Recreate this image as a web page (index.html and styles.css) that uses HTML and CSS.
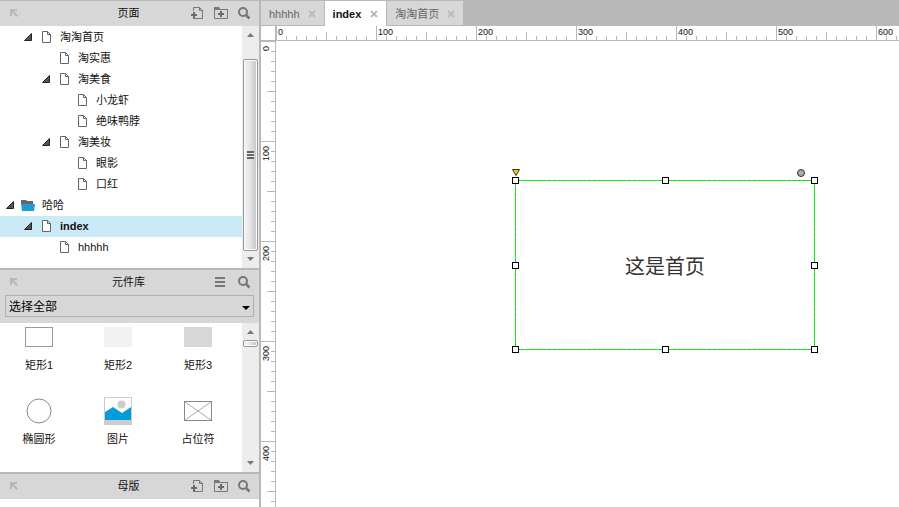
FILE: index.html
```html
<!DOCTYPE html>
<html lang="zh-CN">
<head>
<meta charset="utf-8">
<title>index</title>
<link rel="stylesheet" href="styles.css">
</head>
<body>
<svg class="defs" aria-hidden="true">
  <symbol id="i-collapse" viewBox="0 0 8 8"><path d="M0 0h7v2H3.600L8 6.400 6.400 8 2 3.600V7H0z" fill="#b8b8b8"/></symbol>
  <symbol id="i-add-page" viewBox="0 0 14 14"><path d="M3.500 5V1.500H9.500L12.500 4.500V12.500H3M9.500 1.500V4.500H12.500" fill="none" stroke="#777"/><path d="M4 6v6M1 9h6" stroke="#6a6a6a" stroke-width="2"/></symbol>
  <symbol id="i-add-folder" viewBox="0 0 14 14"><path d="M.5 12.500V3.500H13.500V12.500z" fill="none" stroke="#777"/><path d="M0 1h5l1 2h8v1H0z" fill="#777"/><path d="M7 5v6M4 8h6" stroke="#6a6a6a" stroke-width="2"/></symbol>
  <symbol id="i-search" viewBox="0 0 14 14"><circle cx="5" cy="6" r="4" fill="none" stroke="#777" stroke-width="2"/><path d="M8 9l3.500 3.500" stroke="#777" stroke-width="2.500"/></symbol>
  <symbol id="i-menu" viewBox="0 0 14 14"><path d="M1 3h10M1 7h10M1 11h10" stroke="#777" stroke-width="2"/></symbol>
  <symbol id="i-open" viewBox="0 0 8 8"><path d="M7.500 .5v7h-7z" fill="#555" stroke="#222"/></symbol>
  <symbol id="i-page" viewBox="0 0 16 14"><path d="M4.500 1.500H9.500L12.500 4.500V12.500H4.500z" fill="#fff" stroke="#666"/><path d="M9.500 1.500V4.500H12.500" fill="none" stroke="#666"/></symbol>
  <symbol id="i-folder" viewBox="0 0 16 14"><path d="M1 2h5l1 1h6v3H1z" fill="#666"/><path d="M1 6h14l-1 7H2z" fill="#1e9bd7"/></symbol>
  <symbol id="i-close" viewBox="0 0 8 8"><path d="M1 1l6 6M7 1L1 7" stroke="#bbb" stroke-width="2"/></symbol>
  <symbol id="i-up" viewBox="0 0 7 4"><path d="M3.500 0L7 4H0z" fill="#777"/></symbol>
  <symbol id="i-down" viewBox="0 0 7 4"><path d="M0 0h7L3.500 4z" fill="#777"/></symbol>
</svg>
<div class="app">
  <aside class="side">
    <section class="panel">
      <header class="head">
        <button class="ico small" aria-label="收起"><svg><use href="#i-collapse"/></svg></button>
        <h2>页面</h2>
        <div class="actions">
          <button class="ico" aria-label="添加页面"><svg><use href="#i-add-page"/></svg></button>
          <button class="ico" aria-label="添加文件夹"><svg><use href="#i-add-folder"/></svg></button>
          <button class="ico" aria-label="搜索"><svg><use href="#i-search"/></svg></button>
        </div>
      </header>
      <div class="scroller">
        <ul class="tree">
          <li class="row l1"><svg class="tri"><use href="#i-open"/></svg><svg class="doc"><use href="#i-page"/></svg><span>淘淘首页</span></li>
          <li class="row l2"><svg class="tri"></svg><svg class="doc"><use href="#i-page"/></svg><span>淘实惠</span></li>
          <li class="row l2"><svg class="tri"><use href="#i-open"/></svg><svg class="doc"><use href="#i-page"/></svg><span>淘美食</span></li>
          <li class="row l3"><svg class="tri"></svg><svg class="doc"><use href="#i-page"/></svg><span>小龙虾</span></li>
          <li class="row l3"><svg class="tri"></svg><svg class="doc"><use href="#i-page"/></svg><span>绝味鸭脖</span></li>
          <li class="row l2"><svg class="tri"><use href="#i-open"/></svg><svg class="doc"><use href="#i-page"/></svg><span>淘美妆</span></li>
          <li class="row l3"><svg class="tri"></svg><svg class="doc"><use href="#i-page"/></svg><span>眼影</span></li>
          <li class="row l3"><svg class="tri"></svg><svg class="doc"><use href="#i-page"/></svg><span>口红</span></li>
          <li class="row l0"><svg class="tri"><use href="#i-open"/></svg><svg class="doc"><use href="#i-folder"/></svg><span>哈哈</span></li>
          <li class="row l1 current"><svg class="tri"><use href="#i-open"/></svg><svg class="doc"><use href="#i-page"/></svg><span>index</span></li>
          <li class="row l2"><svg class="tri"></svg><svg class="doc"><use href="#i-page"/></svg><span>hhhhh</span></li>
        </ul>
        <div class="bar" aria-hidden="true">
          <svg><use href="#i-up"/></svg>
          <div class="thumb grip"><i></i></div>
          <svg><use href="#i-down"/></svg>
        </div>
      </div>
    </section>
    <section class="panel">
      <header class="head">
        <button class="ico small" aria-label="收起"><svg><use href="#i-collapse"/></svg></button>
        <h2>元件库</h2>
        <div class="actions">
          <button class="ico" aria-label="菜单"><svg><use href="#i-menu"/></svg></button>
          <button class="ico" aria-label="搜索"><svg><use href="#i-search"/></svg></button>
        </div>
      </header>
      <div class="pick">
        <select aria-label="元件库"><option>选择全部</option></select>
      </div>
      <div class="scroller">
        <ul class="widgets">
          <li><svg viewBox="0 0 28 28"><rect x=".5" y="4.500" width="27" height="19" fill="#fff" stroke="#999"/></svg><span>矩形1</span></li>
          <li><svg viewBox="0 0 28 28"><rect y="4" width="28" height="20" fill="#f2f2f2"/></svg><span>矩形2</span></li>
          <li><svg viewBox="0 0 28 28"><rect y="4" width="28" height="20" fill="#d7d7d7"/></svg><span>矩形3</span></li>
          <li><svg viewBox="0 0 28 28"><circle cx="14" cy="14" r="12" fill="#fff" stroke="#888"/></svg><span>椭圆形</span></li>
          <li><svg viewBox="0 0 28 28"><rect x=".5" y=".5" width="27" height="27" fill="#fff" stroke="#ccc"/><path d="M0 23h28v5H0z" fill="#ccc"/><circle cx="17.500" cy="7.500" r="4" fill="#ccc"/><path d="M1 15l8-5 9 6 9-6v13H1z" fill="#029bdb"/></svg><span>图片</span></li>
          <li><svg viewBox="0 0 28 28"><path d="M.5 4.500L27.500 23.500M27.500 4.500L.5 23.500" stroke="#aaa"/><rect x=".5" y="4.500" width="27" height="19" fill="none" stroke="#888"/></svg><span>占位符</span></li>
        </ul>
        <div class="bar" aria-hidden="true">
          <svg><use href="#i-up"/></svg>
          <div class="thumb short"></div>
          <svg><use href="#i-down"/></svg>
        </div>
      </div>
    </section>
    <section class="panel">
      <header class="head">
        <button class="ico small" aria-label="收起"><svg><use href="#i-collapse"/></svg></button>
        <h2>母版</h2>
        <div class="actions">
          <button class="ico" aria-label="添加母版"><svg><use href="#i-add-page"/></svg></button>
          <button class="ico" aria-label="添加文件夹"><svg><use href="#i-add-folder"/></svg></button>
          <button class="ico" aria-label="搜索"><svg><use href="#i-search"/></svg></button>
        </div>
      </header>
    </section>
  </aside>
  <main class="work">
    <nav class="tabs">
      <div class="tab"><a href="#hhhhh">hhhhh</a><button aria-label="关闭"><svg><use href="#i-close"/></svg></button></div>
      <div class="tab active"><a href="#index">index</a><button aria-label="关闭"><svg><use href="#i-close"/></svg></button></div>
      <div class="tab"><a href="#home">淘淘首页</a><button aria-label="关闭"><svg><use href="#i-close"/></svg></button></div>
    </nav>
    <div class="stage">
      <div class="corner"></div>
      <div class="ruler across"><span>0</span><span>100</span><span>200</span><span>300</span><span>400</span><span>500</span><span>600</span></div>
      <div class="ruler down"><span>0</span><span>100</span><span>200</span><span>300</span><span>400</span></div>
      <div class="canvas">
        <div class="shape">
          <span>这是首页</span>
          <svg class="frame" viewBox="0 0 308 182" aria-hidden="true">
            <rect x="4.500" y="12.500" width="299" height="169" fill="none" stroke="#777"/>
            <g stroke="#0f0" stroke-dasharray="4 1"><path d="M4 12.500H304"/><path d="M4 181.500H304"/><path d="M4.500 12V182"/><path d="M303.500 12V182"/></g>
            <path d="M1.500 1.500h7L5 7.500z" fill="#fc0" stroke="#333"/>
            <circle cx="290" cy="5" r="3.500" fill="#aaa" stroke="#333"/>
            <g fill="#fff" stroke="#000">
              <rect x="1.500" y="9.500" width="6" height="6"/><rect x="151.500" y="9.500" width="6" height="6"/><rect x="300.500" y="9.500" width="6" height="6"/>
              <rect x="1.500" y="94.500" width="6" height="6"/><rect x="300.500" y="94.500" width="6" height="6"/>
              <rect x="1.500" y="178.500" width="6" height="6"/><rect x="151.500" y="178.500" width="6" height="6"/><rect x="300.500" y="178.500" width="6" height="6"/>
            </g>
          </svg>
        </div>
      </div>
    </div>
  </main>
</div>
</body>
</html>
```
FILE: styles.css
```css
* { box-sizing: border-box; }
body {
  margin: 0;
  font: 11px/16px "Liberation Sans", "Noto Sans CJK SC", sans-serif;
  color: #111;
  background: #fff;
}
svg { display: block; flex: none; }
button { border: 0; padding: 0; background: none; }
ul { list-style: none; margin: 0; padding: 0; }
.defs { position: absolute; width: 0; height: 0; }
.app { display: flex; height: 100vh; overflow: hidden; }

/* Side panels */
.side { flex: none; width: 261px; border-right: 2px solid #b8b8b8; }
.panel { border-top: 2px solid #b8b8b8; }
.panel:first-child { border-top-width: 1px; }
.head {
  display: grid;
  grid-template-columns: 68px 1fr 68px;
  align-items: center;
  height: 25px;
  padding: 0 2px 1px 0;
  background: #d7d7d7;
}
.head h2 {
  margin: 0;
  font-size: 11px;
  font-weight: normal;
  text-align: center;
}
.actions { display: flex; justify-content: flex-end; gap: 10px; padding-right: 5px; }
.ico svg { width: 14px; height: 14px; }
.ico.small { padding-left: 10px; }
.ico.small svg { width: 8px; height: 8px; }

.scroller { display: flex; }
.tree { flex: 1; padding: 1px 0 10px; }
.row { display: flex; align-items: center; gap: 6px; height: 21px; padding: 0 0 2px 6px; }
.l1 { padding-left: 24px; }
.l2 { padding-left: 42px; }
.l3 { padding-left: 60px; }
.tri { width: 8px; height: 8px; }
.doc { width: 16px; height: 14px; }
.current { background: #cbeaf7; font-weight: bold; }

.bar {
  display: flex;
  flex-direction: column;
  align-items: center;
  width: 17px;
  padding: 7px 0;
  background: #ececec;
}
.bar svg { width: 7px; height: 4px; }
.bar svg:last-child { margin-top: auto; }
.thumb {
  width: 15px;
  border: 1px solid #999;
  border-radius: 2px;
  background: linear-gradient(90deg, #f5f5f5, #e4e4e6 45%, #c4c5c9);
  box-shadow: inset 0 0 0 1px #fafafa;
}
.grip { display: grid; place-items: center; flex: 1; margin: 22px 0 6px; }
.grip i { width: 7px; height: 8px; background: repeating-linear-gradient(#666 0 2px, #eee 2px 3px); }
.short { height: 7px; margin-top: 6px; }

.pick { position: relative; padding: 0 5px 6px; background: #d7d7d7; }
.pick select {
  display: block;
  appearance: none;
  width: 100%;
  height: 22px;
  padding: 1px 3px 0;
  border: 1px solid #b0b0b0;
  border-radius: 0;
  background: #d7d7d7;
  color: #000;
  font: 12px/20px "Liberation Sans", "Noto Sans CJK SC", sans-serif;
}
.pick::after {
  content: "";
  position: absolute;
  right: 9px;
  top: 11px;
  border: 4px solid transparent;
  border-top-color: #000;
  border-bottom: 0;
}
.widgets {
  flex: 1;
  display: grid;
  grid-template-columns: 78px 80px 80px;
  row-gap: 24px;
  padding-bottom: 25px;
}
.widgets li { display: flex; flex-direction: column; align-items: center; gap: 6px; }
.widgets svg { width: 28px; height: 28px; }

/* Document tabs */
.work { flex: 1; min-width: 0; display: flex; flex-direction: column; }
.tabs { display: flex; gap: 1px; height: 26px; padding-top: 1px; background: #b8b8b8; }
.tab {
  display: flex;
  align-items: center;
  gap: 8px;
  height: 24px;
  padding: 1px 8px 0;
  background: #d7d7d7;
}
.tab a { color: #666; text-decoration: none; }
.tab.active { height: 25px; gap: 9px; background: #fff; font-weight: bold; }
.tab.active a { color: #111; }
.tab svg { width: 8px; height: 8px; }

/* Rulers and canvas */
.stage {
  flex: 1;
  min-height: 0;
  display: grid;
  grid-template: 15px 1fr / 15px 1fr;
}
.corner { border: solid #b8b8b8; border-width: 0 1px 1px 0; }
.ruler { display: flex; overflow: hidden; font-size: 9px; line-height: 10px; }
.ruler span { flex: none; }
.across {
  padding-top: 1px;
  border-bottom: 1px solid #b8b8b8;
  background:
    repeating-linear-gradient(90deg, #b8b8b8 0 1px, transparent 1px 100px) 0 0 / 100% 14px no-repeat,
    repeating-linear-gradient(90deg, #b8b8b8 0 1px, transparent 1px 50px) 0 6px / 100% 8px no-repeat,
    repeating-linear-gradient(90deg, #b8b8b8 0 1px, transparent 1px 10px) 0 10px / 100% 4px no-repeat;
}
.across span { width: 100px; padding-left: 2px; }
.down {
  flex-direction: column;
  border-right: 1px solid #b8b8b8;
  background:
    repeating-linear-gradient(#b8b8b8 0 1px, transparent 1px 100px) 0 0 / 14px 100% no-repeat,
    repeating-linear-gradient(#b8b8b8 0 1px, transparent 1px 50px) 6px 0 / 8px 100% no-repeat,
    repeating-linear-gradient(#b8b8b8 0 1px, transparent 1px 10px) 10px 0 / 4px 100% no-repeat;
}
.down span {
  width: 10px;
  height: 100px;
  padding-bottom: 5px;
  writing-mode: vertical-rl;
  transform: rotate(180deg);
  text-align: right;
}
.canvas { position: relative; overflow: hidden; }
.shape {
  position: absolute;
  left: 239px;
  top: 139px;
  display: grid;
  place-items: center;
  width: 300px;
  height: 170px;
  padding-top: 3px;
  color: #333;
  font-size: 20px;
  line-height: 24px;
}
.frame {
  position: absolute;
  left: -4px;
  top: -12px;
  width: 308px;
  height: 182px;
  overflow: visible;
}
```
